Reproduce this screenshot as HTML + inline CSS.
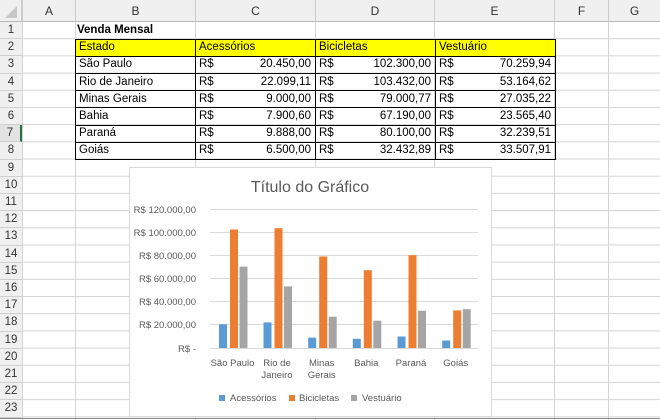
<!DOCTYPE html>
<html><head><meta charset="utf-8"><style>
*{margin:0;padding:0;box-sizing:border-box}
body{width:660px;height:420px;overflow:hidden;background:#fff;font-family:"Liberation Sans",Arial,sans-serif;position:relative}
.grid{position:absolute;left:22px;top:22px;width:638px;height:398px;
background-image:linear-gradient(#d4d4d4 1px,transparent 1px);background-size:100% 17.2px;background-position:0 16.2px}
.vl{position:absolute;top:0;width:1px;height:420px;background:#d4d4d4}
.ch{position:absolute;top:0;height:22px;background:#f0f0f0;border-bottom:1px solid #b8b8b8;font-size:12px;color:#333;text-align:center;line-height:22px}
.rh{position:absolute;left:0;width:22px;height:17.2px;background:#f0f0f0;border-bottom:1px solid #d0d0d0;font-size:11.5px;color:#333;text-align:center;line-height:17px}
table{position:absolute;left:75px;top:38.6px;border-collapse:collapse;font-size:11.5px;color:#000;table-layout:fixed;width:480px}
td{border:1px solid #000;height:17.2px;padding:0 4px 0 3px;line-height:15px;white-space:nowrap;width:120px}
.y td{background:#ffff00}
.m span{float:right}
</style></head><body>
<div class="grid"></div>
<div class="vl" style="left:22px"></div><div class="vl" style="left:75px"></div><div class="vl" style="left:195px"></div><div class="vl" style="left:315px"></div><div class="vl" style="left:434px"></div><div class="vl" style="left:554px"></div><div class="vl" style="left:608px"></div>
<div class="ch" style="left:0;width:22px;border-right:1px solid #ccc"><svg width="22" height="22"><polygon points="17,6 17,18 5,18" fill="#c8c8c8"/></svg></div>
<div class="ch" style="left:22px;width:53px;border-left:1px solid #ccc">A</div>
<div class="ch" style="left:75px;width:120px;border-left:1px solid #ccc">B</div>
<div class="ch" style="left:195px;width:120px;border-left:1px solid #ccc">C</div>
<div class="ch" style="left:315px;width:119px;border-left:1px solid #ccc">D</div>
<div class="ch" style="left:434px;width:120px;border-left:1px solid #ccc">E</div>
<div class="ch" style="left:554px;width:54px;border-left:1px solid #ccc">F</div>
<div class="ch" style="left:608px;width:52px;border-left:1px solid #ccc">G</div>
<div class="rh" style="top:22px">1</div><div class="rh" style="top:39.2px">2</div><div class="rh" style="top:56.4px">3</div><div class="rh" style="top:73.6px">4</div><div class="rh" style="top:90.8px">5</div><div class="rh" style="top:108px">6</div><div class="rh" style="top:125.2px;background:#e2e2e2;border-right:2px solid #217346">7</div><div class="rh" style="top:142.4px">8</div><div class="rh" style="top:159.6px">9</div><div class="rh" style="top:176.8px">10</div><div class="rh" style="top:194px">11</div><div class="rh" style="top:211.2px">12</div><div class="rh" style="top:228.4px">13</div><div class="rh" style="top:245.6px">14</div><div class="rh" style="top:262.8px">15</div><div class="rh" style="top:280px">16</div><div class="rh" style="top:297.2px">17</div><div class="rh" style="top:314.4px">18</div><div class="rh" style="top:331.6px">19</div><div class="rh" style="top:348.8px">20</div><div class="rh" style="top:366px">21</div><div class="rh" style="top:383.2px">22</div><div class="rh" style="top:400.4px">23</div>
<div style="position:absolute;left:77px;top:22px;font-size:11.5px;font-weight:bold;line-height:17px">Venda Mensal</div>
<table>
<tr class="y"><td>Estado</td><td>Acessórios</td><td>Bicicletas</td><td>Vestuário</td></tr>
<tr><td>São Paulo</td><td class="m">R$<span>20.450,00</span></td><td class="m">R$<span>102.300,00</span></td><td class="m">R$<span>70.259,94</span></td></tr>
<tr><td>Rio de Janeiro</td><td class="m">R$<span>22.099,11</span></td><td class="m">R$<span>103.432,00</span></td><td class="m">R$<span>53.164,62</span></td></tr>
<tr><td>Minas Gerais</td><td class="m">R$<span>9.000,00</span></td><td class="m">R$<span>79.000,77</span></td><td class="m">R$<span>27.035,22</span></td></tr>
<tr><td>Bahia</td><td class="m">R$<span>7.900,60</span></td><td class="m">R$<span>67.190,00</span></td><td class="m">R$<span>23.565,40</span></td></tr>
<tr><td>Paraná</td><td class="m">R$<span>9.888,00</span></td><td class="m">R$<span>80.100,00</span></td><td class="m">R$<span>32.239,51</span></td></tr>
<tr><td>Goiás</td><td class="m">R$<span>6.500,00</span></td><td class="m">R$<span>32.432,89</span></td><td class="m">R$<span>33.507,91</span></td></tr>
</table>
<svg style="position:absolute;left:0;top:0" width="660" height="420" font-family="Liberation Sans,Arial,sans-serif">
<rect x="129.5" y="167.5" width="362" height="249" fill="#fff" stroke="#d9d9d9"/>
<text x="310" y="192" font-size="16" fill="#595959" text-anchor="middle">Título do Gráfico</text>
<g stroke="#d9d9d9" stroke-width="1">
<line x1="210" x2="478" y1="209.5" y2="209.5"/><line x1="210" x2="478" y1="232.5" y2="232.5"/><line x1="210" x2="478" y1="255.5" y2="255.5"/><line x1="210" x2="478" y1="278.5" y2="278.5"/><line x1="210" x2="478" y1="301.5" y2="301.5"/><line x1="210" x2="478" y1="324.5" y2="324.5"/><line x1="210" x2="478" y1="348.5" y2="348.5"/>
</g>
<g font-size="9.5" fill="#595959" text-anchor="end">
<text x="196" y="213">R$ 120.000,00</text><text x="196" y="236">R$ 100.000,00</text><text x="196" y="259">R$ 80.000,00</text><text x="196" y="282">R$ 60.000,00</text><text x="196" y="305">R$ 40.000,00</text><text x="196" y="328">R$ 20.000,00</text><text x="196" y="352">R$ -</text>
</g>
<g fill="#5b9bd5"><rect x="219" y="324.3" width="8" height="23.7"/><rect x="263.5" y="322.4" width="8" height="25.6"/><rect x="308.2" y="337.6" width="8" height="10.4"/><rect x="352.8" y="338.8" width="8" height="9.2"/><rect x="397.5" y="336.5" width="8" height="11.5"/><rect x="442.2" y="340.5" width="8" height="7.5"/></g>
<g fill="#ed7d31"><rect x="230" y="229.5" width="8" height="118.5"/><rect x="274.5" y="228.2" width="8" height="119.8"/><rect x="319.2" y="256.5" width="8" height="91.5"/><rect x="363.8" y="270.2" width="8" height="77.8"/><rect x="408.5" y="255.2" width="8" height="92.8"/><rect x="453.2" y="310.4" width="8" height="37.6"/></g>
<g fill="#a5a5a5"><rect x="239.5" y="266.6" width="8" height="81.4"/><rect x="284" y="286.4" width="8" height="61.6"/><rect x="328.7" y="316.7" width="8" height="31.3"/><rect x="373.3" y="320.7" width="8" height="27.3"/><rect x="418" y="310.7" width="8" height="37.3"/><rect x="462.7" y="309.2" width="8" height="38.8"/></g>
<g font-size="9.5" fill="#595959" text-anchor="middle">
<text x="232.5" y="366">São Paulo</text><text x="277" y="366">Rio de</text><text x="277" y="378">Janeiro</text><text x="321.7" y="366">Minas</text><text x="321.7" y="378">Gerais</text><text x="366.3" y="366">Bahia</text><text x="411" y="366">Paraná</text><text x="455.7" y="366">Goiás</text>
</g>
<g font-size="9.5" fill="#595959">
<rect x="219" y="395" width="6" height="6" fill="#5b9bd5"/><text x="230" y="401">Acessórios</text>
<rect x="289" y="395" width="6" height="6" fill="#ed7d31"/><text x="299" y="401">Bicicletas</text>
<rect x="351" y="395" width="6" height="6" fill="#a5a5a5"/><text x="362" y="401">Vestuário</text>
</g>
<line x1="0" x2="660" y1="418.5" y2="418.5" stroke="#888"/>
</svg>
</body></html>
